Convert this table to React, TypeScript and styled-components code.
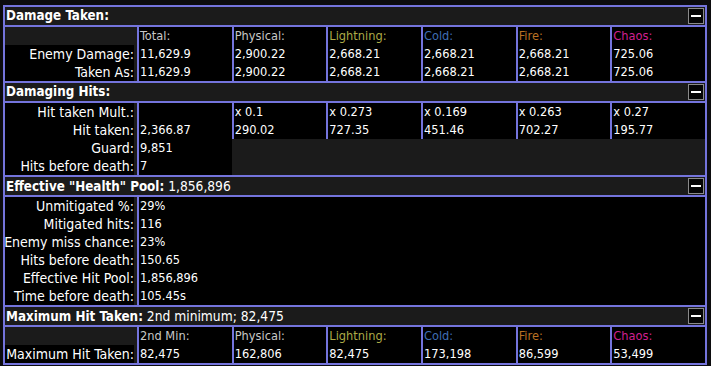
import React from "react";
import styled, { createGlobalStyle } from "styled-components";

const BLUE = "#7474dc";
const GRAY = "#1b1b1b";

const Global = createGlobalStyle`
  html, body { margin: 0; padding: 0; background: #0c0c0e; }
  body { font-family: "DejaVu Sans", "Liberation Sans", sans-serif; }
`;

const Page = styled.div`
  width: 711px;
  height: 366px;
  box-sizing: border-box;
  padding: 5px 4px 0 3px;
  overflow: hidden;
`;

const Panel = styled.div`
  border: 2px solid ${BLUE};
  background: ${GRAY};
  font-stretch: condensed;
  color: #ffffff;
`;

const Section = styled.section`
  & + & {
    border-top: 2px solid ${BLUE};
  }
`;

const Header = styled.div`
  height: 18px;
  display: flex;
  align-items: center;
  padding-left: 1px;
`;

const Title = styled.div`
  font-weight: bold;
  font-size: 13.3px;
  line-height: 18px;
  white-space: nowrap;
`;

const TitleValue = styled.span`
  font-weight: normal;
  font-size: 13.7px;
`;

const Collapse = styled.button`
  margin: 0 1px 0 auto;
  width: 16px;
  height: 16px;
  padding: 0;
  box-sizing: border-box;
  border: 1px solid #8a8a8a;
  background: #050505;
  position: relative;
  &::before {
    content: "";
    position: absolute;
    left: 2px;
    top: 6px;
    width: 10px;
    height: 2px;
    background: #ffffff;
  }
`;

const Body = styled.div`
  border-top: 2px solid ${BLUE};
  display: grid;
  grid-template-columns: 132px repeat(6, 1fr);
  grid-auto-rows: 18px;
`;

const Label = styled.div<{ $blank?: boolean }>`
  grid-column: 1;
  margin-right: 3px;
  background: ${(p) => (p.$blank ? "transparent" : "#000")};
  font-size: 14px;
  line-height: 18px;
  display: flex;
  justify-content: flex-end;
  white-space: nowrap;
  min-width: 0;
`;

const LabelText = styled.span`
  flex: none;
`;

const Cell = styled.div<{ $color?: string; $wide?: boolean }>`
  grid-column: ${(p) => (p.$wide ? "2 / -1" : "auto")};
  border-left: 2px solid ${BLUE};
  background: #000;
  color: ${(p) => p.$color ?? "#ffffff"};
  font-size: 12.7px;
  line-height: 18px;
  padding-left: 1px;
  white-space: nowrap;
  overflow: hidden;
`;

const Filler = styled.div<{ $from: number }>`
  grid-column: ${(p) => p.$from} / -1;
`;

type Col = { t: string; c: string };

const cols = (first: string): Col[] => [
  { t: first, c: "#c8c8c8" },
  { t: "Physical:", c: "#c8c8c8" },
  { t: "Lightning:", c: "#adaa47" },
  { t: "Cold:", c: "#3f6db3" },
  { t: "Fire:", c: "#b97123" },
  { t: "Chaos:", c: "#d02090" },
];

const dmgRow = ["11,629.9", "2,900.22", "2,668.21", "2,668.21", "2,668.21", "725.06"];

const hitRows: [string, string[]][] = [
  ["Hit taken Mult.:", ["", "x 0.1", "x 0.273", "x 0.169", "x 0.263", "x 0.27"]],
  ["Hit taken:", ["2,366.87", "290.02", "727.35", "451.46", "702.27", "195.77"]],
  ["Guard:", ["9,851"]],
  ["Hits before death:", ["7"]],
];

const poolRows: [string, string][] = [
  ["Unmitigated %:", "29%"],
  ["Mitigated hits:", "116"],
  ["Enemy miss chance:", "23%"],
  ["Hits before death:", "150.65"],
  ["Effective Hit Pool:", "1,856,896"],
  ["Time before death:", "105.45s"],
];

const maxRow = ["82,475", "162,806", "82,475", "173,198", "86,599", "53,499"];

function SectionHeader({ title, value }: { title: string; value?: string }) {
  return (
    <Header>
      <Title>
        {title}
        {value && <TitleValue> {value}</TitleValue>}
      </Title>
      <Collapse aria-label="collapse" />
    </Header>
  );
}

function ColumnHeads({ first }: { first: string }) {
  return (
    <>
      <Label $blank />
      {cols(first).map((c) => (
        <Cell key={c.t} $color={c.c}>
          {c.t}
        </Cell>
      ))}
    </>
  );
}

function RowLabel({ text }: { text: string }) {
  return (
    <Label>
      <LabelText>{text}</LabelText>
    </Label>
  );
}

function ValueRow({ label, values }: { label: string; values: string[] }) {
  return (
    <>
      <RowLabel text={label} />
      {values.map((v, i) => (
        <Cell key={i}>{v}</Cell>
      ))}
      {values.length < 6 && <Filler $from={values.length + 2} />}
    </>
  );
}

export default function App() {
  return (
    <Page>
      <Global />
      <Panel>
        <Section>
          <SectionHeader title="Damage Taken:" />
          <Body>
            <ColumnHeads first="Total:" />
            <ValueRow label="Enemy Damage:" values={dmgRow} />
            <ValueRow label="Taken As:" values={dmgRow} />
          </Body>
        </Section>
        <Section>
          <SectionHeader title="Damaging Hits:" />
          <Body>
            {hitRows.map(([l, v]) => (
              <ValueRow key={l} label={l} values={v} />
            ))}
          </Body>
        </Section>
        <Section>
          <SectionHeader title={'Effective "Health" Pool:'} value="1,856,896" />
          <Body>
            {poolRows.map(([l, v]) => (
              <React.Fragment key={l}>
                <RowLabel text={l} />
                <Cell $wide>{v}</Cell>
              </React.Fragment>
            ))}
          </Body>
        </Section>
        <Section>
          <SectionHeader title="Maximum Hit Taken:" value="2nd minimum; 82,475" />
          <Body>
            <ColumnHeads first="2nd Min:" />
            <ValueRow label="Maximum Hit Taken:" values={maxRow} />
          </Body>
        </Section>
      </Panel>
    </Page>
  );
}
